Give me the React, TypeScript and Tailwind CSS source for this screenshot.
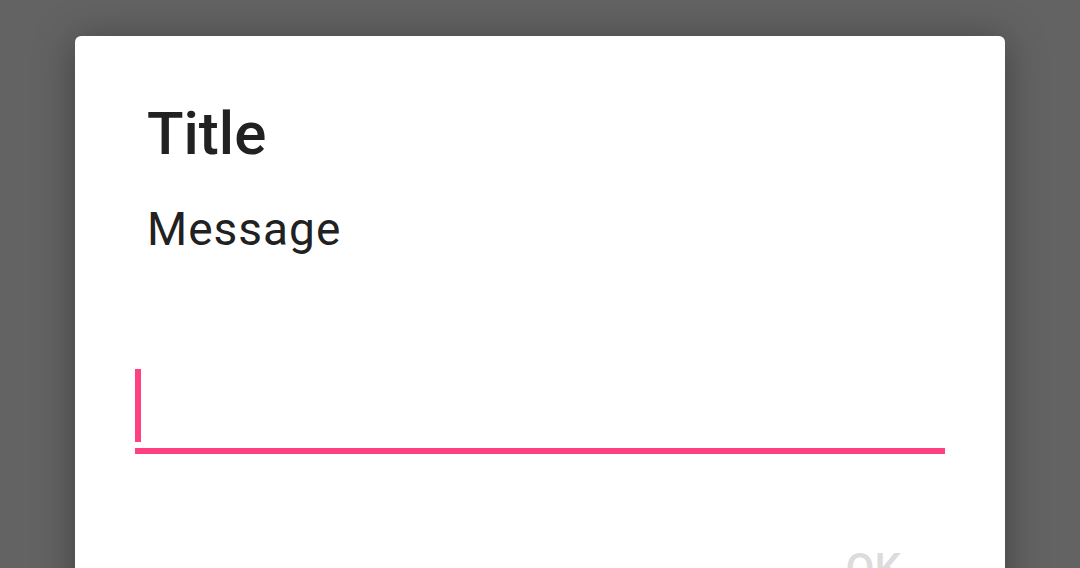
import React from 'react';

const App: React.FC = () => {
    return (
        <div className="h-[568px] w-[1080px] overflow-hidden bg-[#636363] pt-[36px] pl-[75px]" style={{fontFamily: 'Roboto, "Noto Sans", sans-serif'}}>
            <div className="w-[930px] h-[640px] bg-white rounded-[6px] shadow-[0_4px_40px_rgba(0,0,0,0.35)] pt-[68px]">
                <h1 className="pl-[72px] text-[60px] leading-[60px] font-medium text-[#212121]">Title</h1>
                <p className="pl-[72px] mt-[42px] text-[46px] leading-[46px] tracking-[1px] text-[#212121]">Message</p>
                <div className="mx-[60px] mt-[117px] h-[85px] flex flex-col">
                    <div className="h-[73px] w-[6px] bg-[#ff4081]" />
                    <div className="mt-[6px] h-[6px] w-full bg-[#ff4081]" />
                </div>
                <div className="flex justify-end pr-[104px] mt-[94px]">
                    <span className="text-[42px] leading-[42px] font-medium text-[#dcdcdc]">OK</span>
                </div>
            </div>
        </div>
    );
};

export default App;
